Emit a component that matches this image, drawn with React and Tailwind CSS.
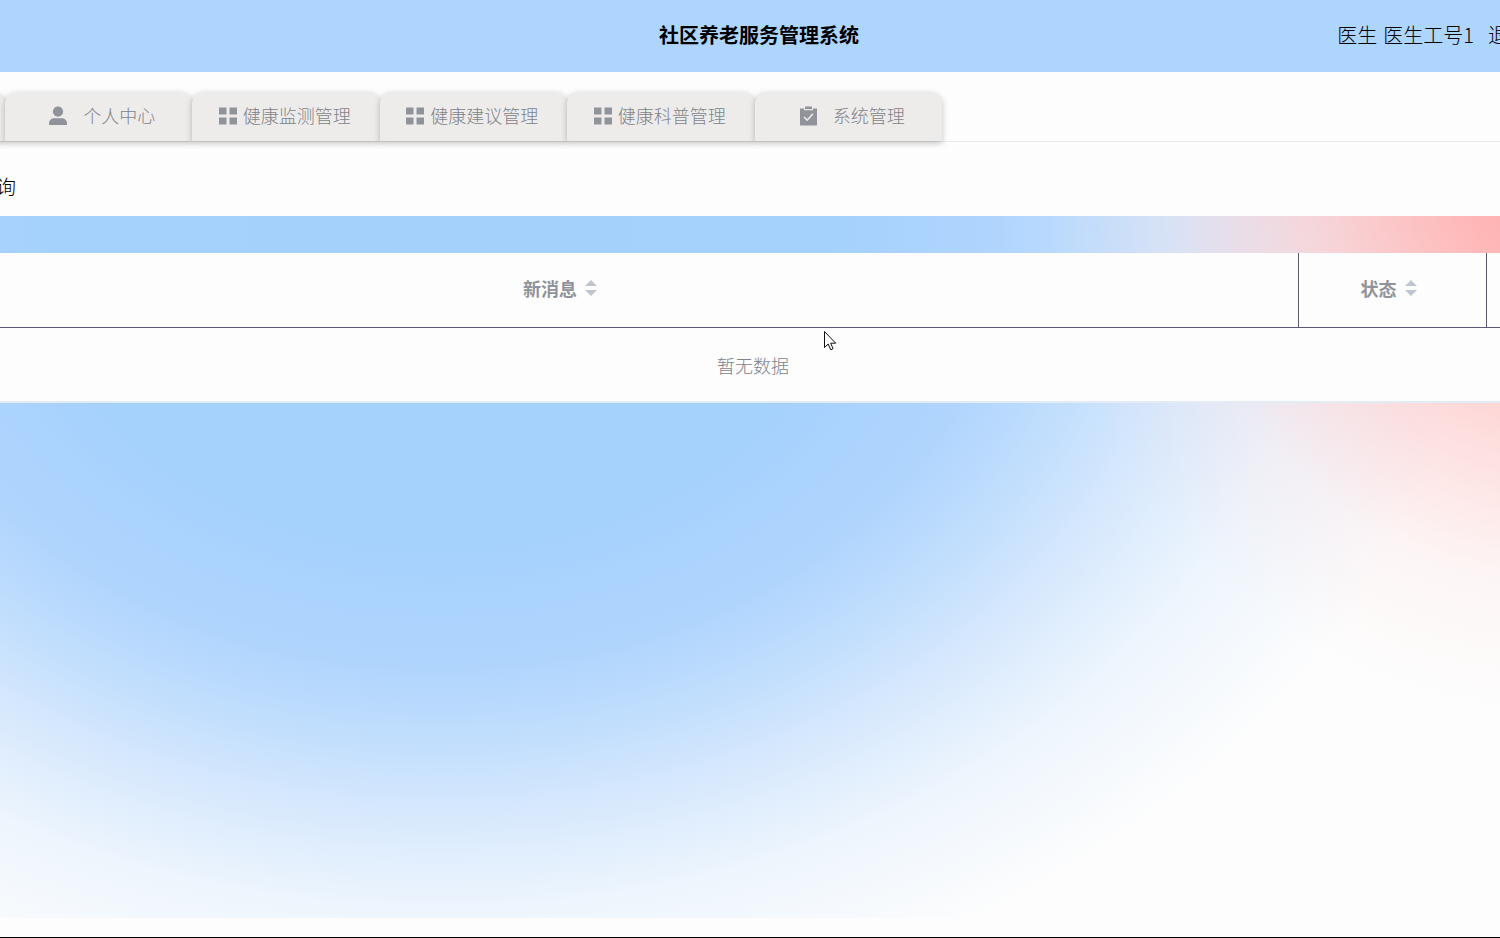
const tabs = [
  { name: '个人中心', icon: UserIcon, short: true },
  { name: '健康监测管理', icon: GridIcon },
  { name: '健康建议管理', icon: GridIcon },
  { name: '健康科普管理', icon: GridIcon },
  { name: '系统管理', icon: ClipboardIcon, short: true },
];

const tabClass = 'w-1/8 shrink-0 h-[49px] pb-0.5 flex items-center justify-center rounded-t-xl bg-[#eeeceb] text-[#909399] text-lg leading-6 whitespace-nowrap shadow-[0_2px_6px_rgba(0,0,0,0.25)]';

function UserIcon() {
  return (
    <svg width="18" height="20" viewBox="0 0 18 20" fill="currentColor" aria-hidden="true">
      <circle cx="9" cy="5.6" r="5.1" />
      <path d="M0 19v-1.6c0-3.2 2.3-5.2 5.4-5.2h7.2c3.1 0 5.4 2 5.4 5.2V19z" />
    </svg>
  );
}

function GridIcon() {
  return (
    <svg width="18" height="18" viewBox="0 0 18 18" fill="currentColor" aria-hidden="true">
      <path d="M0 .5h7.5v7H0zM10.5.5H18v7h-7.5zM0 10.5h7.5v7H0zM10.5 10.5H18v7h-7.5z" />
    </svg>
  );
}

function ClipboardIcon() {
  return (
    <svg width="17" height="20" viewBox="0 0 17 20" aria-hidden="true">
      <path d="M0 2.5h4v1.8h9V2.5h4v17H0z" fill="currentColor" />
      <path d="M5 .5h7v2.6H5z" fill="currentColor" />
      <path d="M4 11l3.2 3.2L13 7.8" fill="none" stroke="#eeeceb" strokeWidth="1.6" />
    </svg>
  );
}

function SortIcon() {
  return (
    <svg width="12" height="18" viewBox="0 0 12 18" fill="#c0c4cc" aria-hidden="true">
      <path d="M6 1l6 6H0zM6 17l6-6H0z" />
    </svg>
  );
}

function Cursor() {
  return (
    <svg className="absolute left-[824px] top-[331px] pointer-events-none" width="13" height="20" viewBox="0 0 13 20" aria-hidden="true">
      <path d="M.5.5v16L4.200 13l2.500 5.700 2.400-1-2.500-5.500h5.100z" fill="#fff" stroke="#111" />
    </svg>
  );
}

function SortableHeader({ label }) {
  return (
    <th className="h-[75px] pr-2 pb-2 border-r border-b border-[#5c5a72]">
      <button type="button" className="inline-flex items-center gap-2 align-middle font-bold">
        {label}
        <SortIcon />
      </button>
    </th>
  );
}

export default function App() {
  return (
    <div className="relative min-h-screen flex flex-col overflow-hidden bg-[#fdfdfd] font-['Noto_Sans_CJK_SC',sans-serif]">
      <header className="h-18 -mr-[18px] px-2.5 pb-0.5 flex items-center bg-[#aed5fe] text-xl text-black whitespace-nowrap">
        <div className="flex-1" />
        <h1 className="font-bold">社区养老服务管理系统</h1>
        <div className="flex-1 flex justify-end gap-1.5 font-light">
          <span>医生</span>
          <span>医生工号1</span>
          <a href="#logout" className="pl-2">退</a>
        </div>
      </header>

      <nav className="mt-5 border-b border-[#e9e9e9]">
        <div className="flex -translate-x-[183px]">
          <span className={tabClass} />
          {tabs.map(({ name, icon: Icon, short }) => (
            <a key={name} href="#menu" className={`${tabClass} ${short ? 'gap-4 pl-2' : 'gap-1.5 pr-0.5'}`}>
              <Icon />
              <span className="pb-0.5 font-light text-[#7f8389]">{name}</span>
            </a>
          ))}
        </div>
      </nav>

      <div className="h-[74px] pt-4 flex items-center">
        <button type="button" className="-ml-1 text-xl font-light text-black">询</button>
      </div>

      <main
        className="flex-1 pt-[37px] mb-[19px] bg-[radial-gradient(520px_560px_at_calc(100%+60px)_-60px,rgba(255,165,165,0.95)_0%,rgba(255,165,165,0.8)_20%,rgba(255,178,178,0.45)_50%,rgba(255,200,200,0.15)_76%,rgba(255,255,255,0)_100%),radial-gradient(1040px_800px_at_440px_20px,#a4d0fc_0%,#a5d1fd_38%,#b0d5fd_54%,#c3dffd_64%,#d6e8fd_72%,#edf5fd_84%,#fdfdfd_100%)]"
      >
        <div className="-ml-[170px] -mr-[176px] border-b-2 border-[#e3ecf5]">
          <table className="w-full table-fixed border-separate border-spacing-0 bg-[#fdfdfd] text-lg leading-6 text-[#909399]">
            <colgroup>
              <col />
              <col className="w-[188px]" />
              <col className="w-[189px]" />
            </colgroup>
            <thead>
              <tr>
                <SortableHeader label="新消息" />
                <SortableHeader label="状态" />
                <th className="border-b border-[#5c5a72]" />
              </tr>
            </thead>
            <tbody>
              <tr>
                <td colSpan={3} className="h-[73px] text-center font-light text-[#7f8389]">暂无数据</td>
              </tr>
            </tbody>
          </table>
        </div>
      </main>

      <footer className="h-px bg-black" />
      <Cursor />
    </div>
  );
}
